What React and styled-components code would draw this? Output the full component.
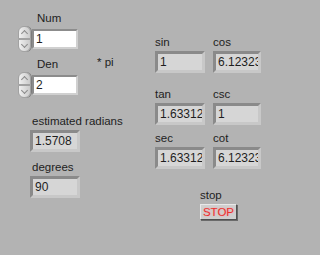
import React from "react";
import styled, { createGlobalStyle } from "styled-components";

const Global = createGlobalStyle`
  html, body { margin: 0; padding: 0; background: #b3b3b3; }
  body { font-family: "Liberation Sans", Arial, sans-serif; }
`;

const Panel = styled.div`
  width: 320px;
  height: 255px;
  background: #b3b3b3;
  display: flex;
  color: #1e1e1e;
  font-size: 11.5px;
  overflow: hidden;
`;

const LeftCol = styled.div`
  display: flex;
  flex-direction: column;
  padding: 12px 0 0 18px;
  width: 80px;
`;

const Label = styled.div`
  line-height: 13px;
  height: 13px;
  padding-left: ${(p) => p.$indent || 0}px;
  white-space: nowrap;
`;

const ControlRow = styled.div`
  display: flex;
  align-items: center;
  gap: 1px;
  margin-top: 1px;
  margin-bottom: ${(p) => p.$after || 0}px;
`;

const Spinner = styled.div`
  width: 13px;
  height: 26px;
  display: flex;
  flex-direction: column;
  box-shadow: 1px 0 0 #7c7c7c;
  border-radius: 6px;
`;

const SpinHalf = styled.div`
  flex: 1;
  display: flex;
  align-items: center;
  justify-content: center;
  box-sizing: border-box;
  border: 1px solid #a2a2a2;
  background: linear-gradient(to right, #f0f0f0, #cbcbcb);
  border-radius: ${(p) => (p.$down ? "0 0 6px 6px" : "6px 6px 0 0")};
`;

const Caret = styled.div`
  width: 4px;
  height: 4px;
  border: solid #8a8a8a;
  border-width: 1px 0 0 1px;
  transform: ${(p) =>
    p.$down ? "translateY(-1px) rotate(225deg)" : "translateY(1px) rotate(45deg)"};
`;

const Entry = styled.div`
  width: 46px;
  height: 20px;
  box-sizing: border-box;
  border: 2px solid;
  border-color: #8c8c8c #d0d0d0 #d0d0d0 #8c8c8c;
  background: #ffffff;
  padding-left: 2px;
  line-height: 16px;
  font-size: 12px;
`;

const Readout = styled.div`
  width: ${(p) => p.$w || 50}px;
  height: 22px;
  box-sizing: border-box;
  border: 3px solid;
  border-color: #8a8a8a #c8c8c8 #c8c8c8 #8a8a8a;
  background: #d6d6d6;
  padding-left: 2px;
  line-height: 16px;
  font-size: 12px;
  overflow: hidden;
  white-space: nowrap;
  margin-top: 2px;
  margin-bottom: ${(p) => p.$after || 0}px;
`;

const Indented = styled.div`
  padding-left: 12px;
`;

const PiLabel = styled.div`
  padding-top: 56px;
  margin-left: -1px;
  width: 58px;
`;

const RightArea = styled.div`
  display: flex;
  flex-direction: column;
  padding-top: 36px;
`;

const TrigRow = styled.div`
  display: grid;
  grid-template-columns: 58px 50px;
  margin-bottom: ${(p) => p.$after || 0}px;
`;

const Cell = styled.div`
  display: flex;
  flex-direction: column;
`;

const StopBlock = styled.div`
  display: flex;
  flex-direction: column;
  margin: 20px 0 0 45px;
`;

const StopButton = styled.button`
  width: 37px;
  height: 16px;
  margin-top: 2px;
  padding: 0;
  border: 1px solid;
  border-color: #e8e8e8 #505050 #505050 #e8e8e8;
  box-shadow: 1px 1px 0 #6a6a6a;
  background: #cfcfcf;
  color: #e83030;
  font-family: "Liberation Sans", Arial, sans-serif;
  font-size: 11.5px;
  line-height: 14px;
  text-shadow: 0 0 2px #ff9a9a;
`;

const trig = [
  ["sin", "1", "cos", "6.12323E-17", 15],
  ["tan", "1.63312E+16", "csc", "1", 7],
  ["sec", "1.63312E+16", "cot", "6.12323E-17", 0],
];

function NumControl({ value, after }) {
  return (
    <ControlRow $after={after}>
      <Spinner>
        <SpinHalf>
          <Caret />
        </SpinHalf>
        <SpinHalf $down>
          <Caret $down />
        </SpinHalf>
      </Spinner>
      <Entry>{value}</Entry>
    </ControlRow>
  );
}

export default function App() {
  return (
    <>
      <Global />
      <Panel>
        <LeftCol>
          <Label $indent={19}>Num</Label>
          <NumControl value="1" after={6} />
          <Label $indent={19}>Den</Label>
          <NumControl value="2" after={17} />
          <Label $indent={14}>estimated radians</Label>
          <Indented>
            <Readout $after={9}>1.5708</Readout>
          </Indented>
          <Label $indent={14}>degrees</Label>
          <Indented>
            <Readout>90</Readout>
          </Indented>
        </LeftCol>
        <PiLabel>* pi</PiLabel>
        <RightArea>
          {trig.map((r) => (
            <TrigRow key={r[0]} $after={r[4]}>
              <Cell>
                <Label>{r[0]}</Label>
                <Readout>{r[1]}</Readout>
              </Cell>
              <Cell>
                <Label>{r[2]}</Label>
                <Readout $w={48}>{r[3]}</Readout>
              </Cell>
            </TrigRow>
          ))}
          <StopBlock>
            <Label>stop</Label>
            <StopButton>STOP</StopButton>
          </StopBlock>
        </RightArea>
      </Panel>
    </>
  );
}
